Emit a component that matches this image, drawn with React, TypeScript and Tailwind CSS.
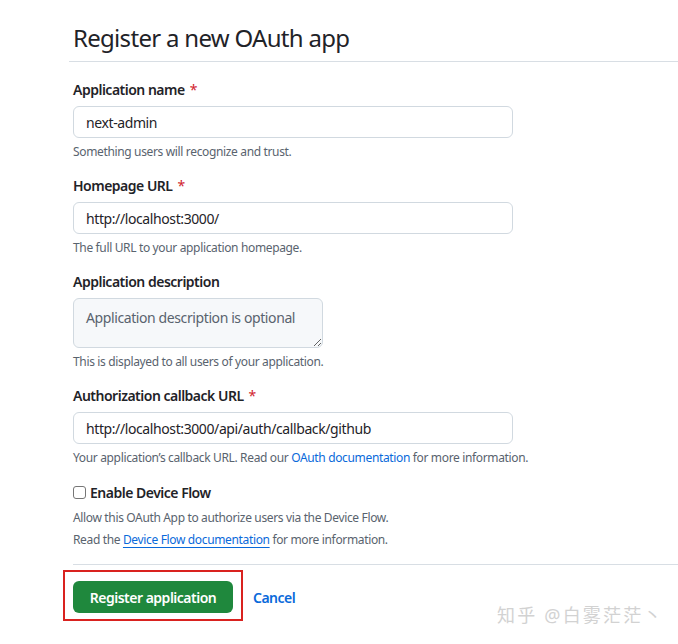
import React from 'react';

const font = { fontFamily: '"Noto Sans", "Noto Sans CJK SC", sans-serif' };

const Label: React.FC<{ text: string; required?: boolean }> = ({ text, required }) => (
  <label className="block text-[14px] leading-[20px] font-semibold tracking-[-0.5px] text-[#1f2328]">
    {text}
    {required && <span className="ml-[5px] text-[#d1242f] font-normal">*</span>}
  </label>
);

const Hint: React.FC<{ children: React.ReactNode }> = ({ children }) => (
  <p className="mt-[5px] text-[12px] leading-[18px] tracking-[-0.35px] text-[#59636e]">{children}</p>
);

const TextInput: React.FC<{ value: string }> = ({ value }) => (
  <input
    readOnly
    value={value}
    className="mt-[6px] block w-[440px] h-[32px] px-[12px] text-[14px] tracking-[-0.4px] text-[#1f2328] bg-white border border-[#d1d9e0] rounded-[6px] outline-none"
  />
);

export default function App() {
  return (
    <div className="relative w-[678px] h-[644px] bg-white overflow-hidden" style={font}>
      <div className="pl-[73px]">
        {/* Header */}
        <h1 className="mt-[23px] -ml-[4px] pl-[4px] pb-[8px] text-[24px] leading-[30px] font-normal tracking-[-0.7px] text-[#1f2328] border-b border-[#d8dee4]">
          Register a new OAuth app
        </h1>

        <div className="mt-[18px]">
          <Label text="Application name" required />
          <TextInput value="next-admin" />
          <Hint>Something users will recognize and trust.</Hint>
        </div>

        <div className="mt-[15px]">
          <Label text="Homepage URL" required />
          <TextInput value="http://localhost:3000/" />
          <Hint>The full URL to your application homepage.</Hint>
        </div>

        <div className="mt-[15px]">
          <Label text="Application description" />
          <textarea
            readOnly
            placeholder="Application description is optional"
            className="mt-[6px] block w-[250px] h-[50px] px-[12px] py-[9px] text-[14px] leading-[20px] tracking-[-0.4px] bg-[#f6f8fa] border border-[#d1d9e0] rounded-[6px] outline-none placeholder:text-[#59636e]"
          />
          <Hint>This is displayed to all users of your application.</Hint>
        </div>

        <div className="mt-[15px]">
          <Label text="Authorization callback URL" required />
          <TextInput value="http://localhost:3000/api/auth/callback/github" />
          <Hint>
            Your application’s callback URL. Read our{' '}
            <a className="text-[#0969da]">OAuth documentation</a> for more information.
          </Hint>
        </div>

        <div className="mt-[15px]">
          <label className="flex items-center h-[20px] text-[14px] font-semibold tracking-[-0.5px] text-[#1f2328]">
            <span className="w-[13px] h-[13px] mr-[4px] border border-[#767676] rounded-[3px] bg-white" />
            Enable Device Flow
          </label>
          <div className="mt-[5px] text-[12px] leading-[22px] tracking-[-0.35px] text-[#59636e]">
            <p>Allow this OAuth App to authorize users via the Device Flow.</p>
            <p>
              Read the <a className="text-[#0969da] underline underline-offset-[3px]">Device Flow documentation</a> for
              more information.
            </p>
          </div>
        </div>

        <div className="mt-[13px] border-t border-[#d8dee4]" />

        {/* Actions */}
        <div className="mt-[5px] -ml-[10px] flex items-center">
          <div className="border-2 border-[#d9221f] pt-[9px] pb-[6px] px-[8px]">
            <button className="h-[32px] w-[160px] rounded-[6px] bg-[#1f883d] text-white text-[14px] font-semibold tracking-[-0.5px]">
              Register application
            </button>
          </div>
          <a className="ml-[10px] mt-[4px] text-[14px] font-semibold tracking-[-0.5px] text-[#0969da]">Cancel</a>
        </div>
      </div>

      {/* Watermark */}
      <div className="absolute left-[497px] top-[603px] text-[18px] leading-[24px] text-[#d2d2d2] tracking-[2.2px]">
        知乎 @白雾茫茫丶
      </div>
    </div>
  );
}
